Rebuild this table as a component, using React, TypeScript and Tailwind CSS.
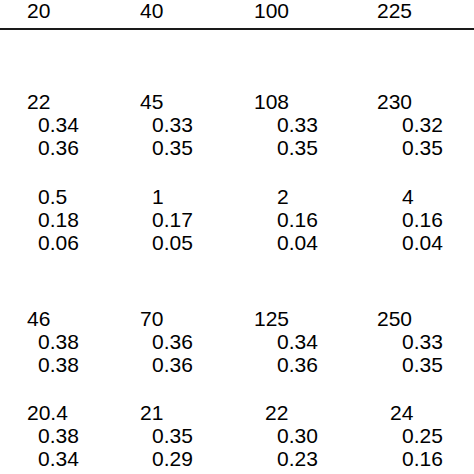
const cols = ['w-[113px]', 'w-[124px]', 'w-[123px]', 'w-[114px]'];

type Cell = { label: string; labelOffset: string; values: string[] };

const valueOffsets = ['pl-[38px]', 'pl-[39px]', 'pl-[40px]', 'pl-[42px]'];

const header: { text: string; offset: string }[] = [
  { text: '20', offset: 'pl-[27px]' },
  { text: '40', offset: 'pl-[27px]' },
  { text: '100', offset: 'pl-[17px]' },
  { text: '225', offset: 'pl-[17px]' },
];

const blocks: { gap: string; cells: Cell[] }[] = [
  {
    gap: 'mt-[60px]',
    cells: [
      { label: '22', labelOffset: 'pl-[27px]', values: ['0.34', '0.36'] },
      { label: '45', labelOffset: 'pl-[27px]', values: ['0.33', '0.35'] },
      { label: '108', labelOffset: 'pl-[17px]', values: ['0.33', '0.35'] },
      { label: '230', labelOffset: 'pl-[17px]', values: ['0.32', '0.35'] },
    ],
  },
  {
    gap: 'mt-[26px]',
    cells: [
      { label: '0.5', labelOffset: 'pl-[38px]', values: ['0.18', '0.06'] },
      { label: '1', labelOffset: 'pl-[39px]', values: ['0.17', '0.05'] },
      { label: '2', labelOffset: 'pl-[40px]', values: ['0.16', '0.04'] },
      { label: '4', labelOffset: 'pl-[42px]', values: ['0.16', '0.04'] },
    ],
  },
  {
    gap: 'mt-[53px]',
    cells: [
      { label: '46', labelOffset: 'pl-[27px]', values: ['0.38', '0.38'] },
      { label: '70', labelOffset: 'pl-[27px]', values: ['0.36', '0.36'] },
      { label: '125', labelOffset: 'pl-[17px]', values: ['0.34', '0.36'] },
      { label: '250', labelOffset: 'pl-[17px]', values: ['0.33', '0.35'] },
    ],
  },
  {
    gap: 'mt-[25px]',
    cells: [
      { label: '20.4', labelOffset: 'pl-[27px]', values: ['0.38', '0.34'] },
      { label: '21', labelOffset: 'pl-[27px]', values: ['0.35', '0.29'] },
      { label: '22', labelOffset: 'pl-[28px]', values: ['0.30', '0.23'] },
      { label: '24', labelOffset: 'pl-[30px]', values: ['0.25', '0.16'] },
    ],
  },
];

export default function App() {
  return (
    <div className="h-[474px] w-[474px] overflow-hidden bg-white text-[21px] leading-[23px] text-black [font-family:'Liberation_Sans',Arial,sans-serif]">
      <div className="mt-[-1px] flex">
        {header.map((h, i) => (
          <div key={h.text} className={`${cols[i]} ${h.offset}`}>
            {h.text}
          </div>
        ))}
      </div>
      <div className="mt-[6px] h-[2px] bg-[#1a1a1a]" />
      {blocks.map((block, bi) => (
        <div key={bi} className={`flex ${block.gap}`}>
          {block.cells.map((cell, ci) => (
            <div key={ci} className={`${cols[ci]} flex flex-col`}>
              <div className={cell.labelOffset}>{cell.label}</div>
              {cell.values.map((v, vi) => (
                <div key={vi} className={valueOffsets[ci]}>
                  {v}
                </div>
              ))}
            </div>
          ))}
        </div>
      ))}
    </div>
  );
}
